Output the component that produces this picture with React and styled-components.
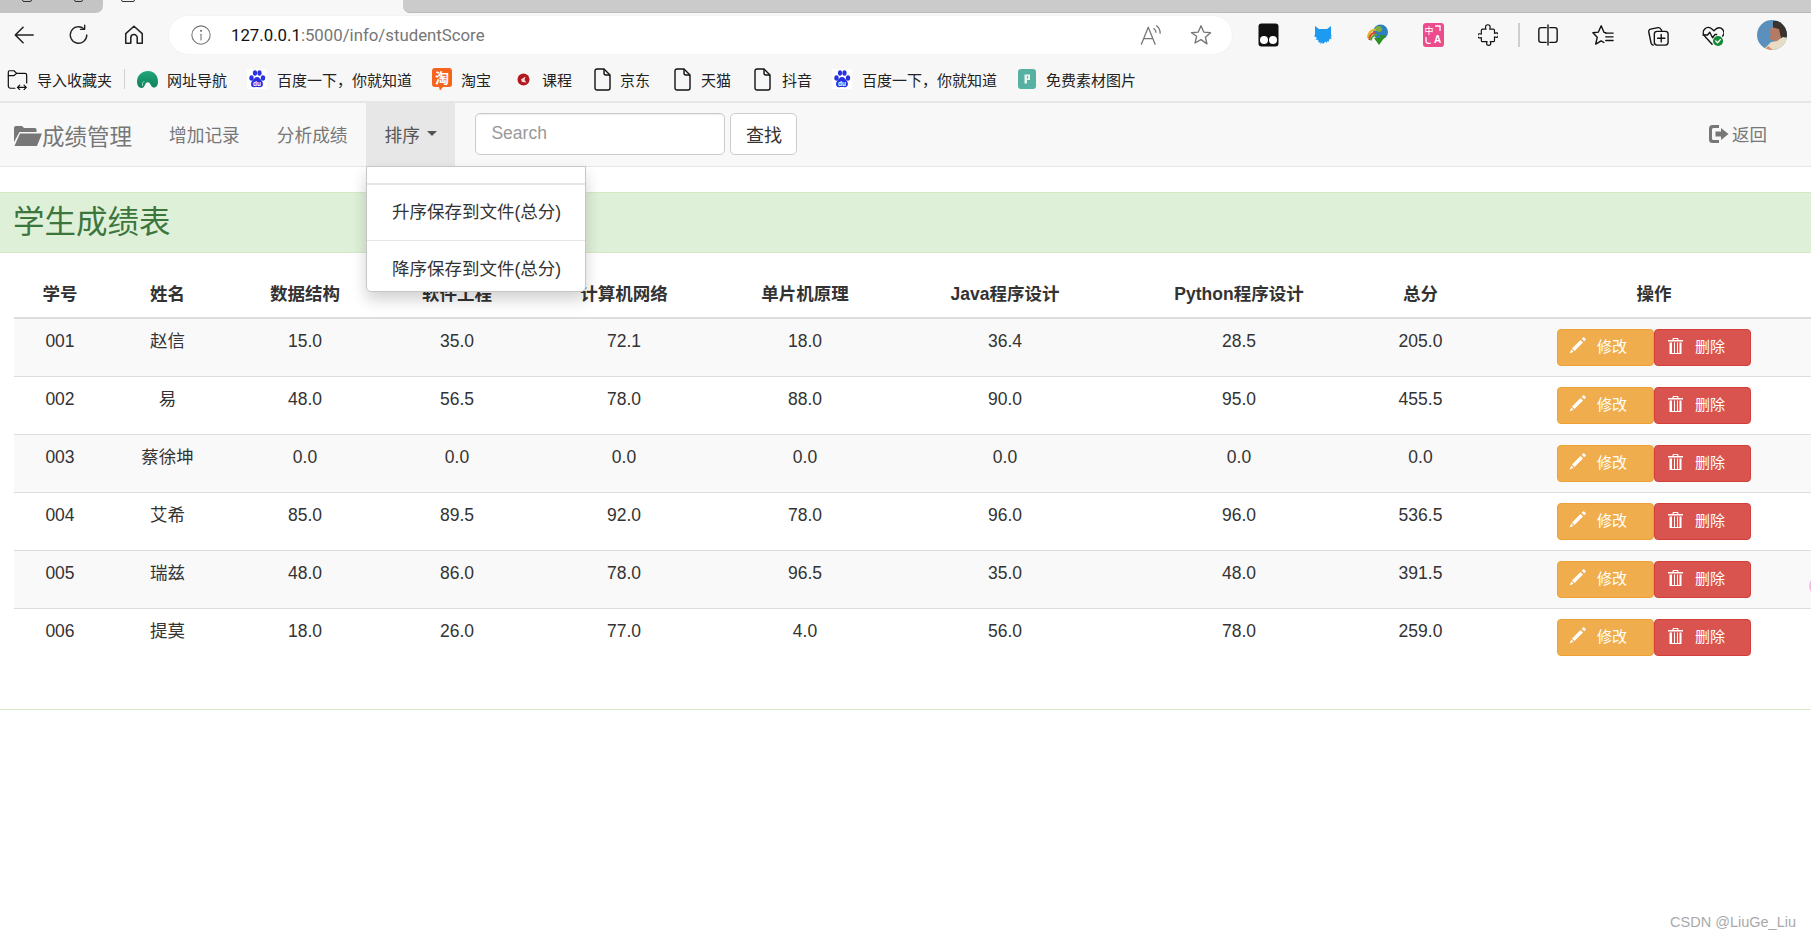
import React from 'react';
import styled, { createGlobalStyle } from 'styled-components';

const SANS = '"Liberation Sans", "Noto Sans CJK SC", sans-serif';
const UI = 'Roboto, "Noto Sans CJK SC", sans-serif';

const Global = createGlobalStyle`
  html, body { margin: 0; padding: 0; background: #fff; overflow: hidden; }
  * { box-sizing: border-box; }
`;

const Page = styled.div`
  position: relative;
  width: 1811px;
  height: 938px;
  overflow: hidden;
  background: #fff;
  font-family: ${SANS};
  color: #333;
`;

/* ---------- browser chrome ---------- */
const TabStrip = styled.div`
  display: flex;
  height: 13px;
  background: #f7f7f7;
`;
const BackTab = styled.div`
  position: relative;
  width: 103px;
  background: #c4c4c4;
  border-bottom-right-radius: 7px;
  overflow: hidden;
`;
const TabGlyph = styled.span`
  position: absolute;
  top: -6px;
  left: ${p => p.$x}px;
  width: ${p => p.$w}px;
  height: 8px;
  border: 1.5px solid #333;
  border-radius: 2px;
`;
const ActiveTab = styled.div`
  position: relative;
  width: 300px;
`;
const RestTabs = styled.div`
  flex: 1;
  background: #cbcbcb;
  border-bottom: 1px solid #b9b9b9;
  border-bottom-left-radius: 7px;
`;
const Toolbar = styled.div`
  display: flex;
  align-items: center;
  height: 44px;
  padding-left: 12.5px;
  background: #f7f7f7;
`;
const ToolGroup = styled.div`
  display: flex;
  align-items: center;
  gap: 33px;
`;
const ToolIcon = styled.span`
  display: flex;
  align-items: center;
  justify-content: center;
  width: 22px;
  height: 24px;
  flex: none;
`;
const AddressBar = styled.div`
  display: flex;
  align-items: center;
  width: 1063px;
  height: 38px;
  margin: 0 25px 0 24.5px;
  padding: 0 20px 0 22px;
  background: #fff;
  border-radius: 19px;
  font: 400 16.8px ${UI};
  box-shadow: 0 0 2px rgba(0,0,0,.05);
`;
const UrlText = styled.div`
  margin-left: 20px;
  flex: 1;
  color: #767676;
  white-space: nowrap;
`;
const UrlHost = styled.span`
  color: #111;
`;
const AddrIcons = styled.div`
  display: flex;
  align-items: center;
  gap: 28px;
`;
const ToolSep = styled.span`
  width: 2px;
  height: 24px;
  margin: 0 17px 0 19px;
  background: #cfcfcf;
  flex: none;
`;
const BookmarkBar = styled.div`
  display: flex;
  align-items: center;
  height: 46px;
  padding-left: 7px;
  background: #f7f7f7;
  border-bottom: 2px solid #e6e6e6;
  font: 400 15px "Noto Sans CJK SC", sans-serif;
  color: #222;
`;
const Bookmark = styled.div`
  display: flex;
  align-items: center;
  width: ${p => p.$w}px;
  flex: none;
  white-space: nowrap;
`;
const BookmarkIcon = styled.span`
  display: flex;
  align-items: center;
  width: ${p => p.$w}px;
  flex: none;
`;
const BookmarkSep = styled.span`
  width: 1px;
  height: 20px;
  margin: 0 12px 0 0;
  background: #cfcfcf;
  flex: none;
`;

/* ---------- app navbar ---------- */
const Navbar = styled.nav`
  position: relative;
  z-index: 5;
  display: flex;
  align-items: stretch;
  height: 64px;
  padding-left: 13px;
  margin-bottom: 25px;
  background: #f8f8f8;
  border-bottom: 1.5px solid #e7e7e7;
`;
const Brand = styled.div`
  display: flex;
  align-items: center;
  padding-right: 18.5px;
  font-size: 22.5px;
  color: #777;
`;
const NavItem = styled.div`
  position: relative;
  display: flex;
  align-items: center;
  padding: 0 18.5px 2px 18.5px;
  font-size: 17.7px;
  color: ${p => (p.$active ? '#555' : '#777')};
  background: ${p => (p.$active ? '#e7e7e7' : 'transparent')};
`;
const Caret = styled.span`
  width: 0;
  height: 0;
  margin-left: 7px;
  border-top: 5px solid #555;
  border-left: 5px solid transparent;
  border-right: 5px solid transparent;
`;
const Dropdown = styled.div`
  position: absolute;
  top: 100%;
  left: 0;
  width: 220px;
  height: 126px;
  padding-top: 16px;
  background: #fff;
  border: 1px solid #c6c6c6;
  border-radius: 0 0 5px 5px;
  box-shadow: 0 8px 15px rgba(0,0,0,.175);
`;
const DropDivider = styled.div`
  height: 1.5px;
  background: #e5e5e5;
`;
const DropItem = styled.div`
  display: flex;
  align-items: center;
  height: 55px;
  padding-left: 25px;
  padding-bottom: 3px;
  font-size: 17.5px;
  color: #333;
  white-space: nowrap;
`;
const SearchForm = styled.div`
  display: flex;
  align-items: center;
  gap: 5px;
  margin-left: 20px;
  padding-bottom: 2px;
`;
const SearchInput = styled.input`
  width: 250px;
  height: 42px;
  padding: 0 15px;
  border: 1px solid #ccc;
  border-radius: 5px;
  background: #fff;
  box-shadow: inset 0 1px 1px rgba(0,0,0,.075);
  font: 400 17.5px ${SANS};
  color: #555;
  &::placeholder { color: #999; opacity: 1; }
`;
const SearchBtn = styled.button`
  width: 67px;
  height: 42px;
  padding: 0;
  border: 1px solid #ccc;
  border-radius: 5px;
  background: #fff;
  font: 400 18px ${SANS};
  color: #333;
`;
const NavReturn = styled.div`
  display: flex;
  align-items: center;
  gap: 3px;
  margin-left: auto;
  padding-right: 44px;
  padding-bottom: 2px;
  font-size: 17.5px;
  color: #777;
`;

/* ---------- panel + table ---------- */
const Panel = styled.section`
  height: 518px;
  border-bottom: 1.5px solid #d6e9c6;
`;
const PanelHeading = styled.h3`
  display: flex;
  align-items: center;
  height: 61px;
  margin: 0;
  padding: 0 0 7px 13px;
  background: #dff0d8;
  border-top: 1px solid #d6e9c6;
  border-bottom: 1px solid #d6e9c6;
  font-size: 31.5px;
  font-weight: 400;
  color: #3c763d;
`;
const PanelBody = styled.div`
  padding: 18.5px 0 0 14px;
`;
const Table = styled.table`
  width: 1816px;
  table-layout: fixed;
  border-collapse: separate;
  border-spacing: 0;
  font-size: 17.5px;
`;
const Col = styled.col`
  width: ${p => p.$w}px;
`;
const Th = styled.th`
  padding: 10px 0;
  height: 47.5px;
  line-height: 25px;
  font-weight: 700;
  text-align: center;
  vertical-align: bottom;
  color: #333;
  border-bottom: 2.5px solid #ddd;
`;
const Tr = styled.tr`
  background: ${p => (p.$odd ? '#f9f9f9' : '#fff')};
`;
const Td = styled.td`
  height: ${p => (p.$first ? '57px' : '57.8px')};
  padding: 10px 0;
  line-height: 25px;
  text-align: center;
  vertical-align: top;
  color: #333;
  border-top: ${p => (p.$first ? '0' : '1px solid #ddd')};
`;
const Actions = styled.div`
  display: flex;
  justify-content: center;
`;
const ActionBtn = styled.button`
  display: flex;
  align-items: center;
  gap: ${p => p.$gap}px;
  width: 97px;
  height: 37px;
  padding: 0 0 4px ${p => p.$pad}px;
  background: ${p => p.$bg};
  border: 1px solid ${p => p.$line};
  border-radius: 4px;
  font: 400 15px ${SANS};
  color: #fff;
`;
const Watermark = styled.div`
  position: absolute;
  right: 15px;
  bottom: 8px;
  font: 400 14.5px "Liberation Sans", sans-serif;
  color: #a9a9a9;
`;
const EdgeDot = styled.div`
  position: absolute;
  left: 1809px;
  top: 576px;
  width: 20px;
  height: 20px;
  border-radius: 50%;
  background: #f6bde8;
`;

/* ---------- icons ---------- */
const Svg = ({ w = 22, h = 22, vb = '0 0 24 24', c = '#222', sw = 1.7, children }) => (
  <svg width={w} height={h} viewBox={vb} fill="none" stroke={c} strokeWidth={sw} strokeLinecap="round" strokeLinejoin="round">{children}</svg>
);
const BackIcon = () => <Svg w={24} h={24}><path d="M22 12H2.5M11 3.5 2.5 12l8.5 8.5" /></Svg>;
const ReloadIcon = () => <Svg w={26} h={26} sw={1.5}><path d="M20.5 12a9 9 0 1 1-3.2-6.9" /><path d="M18.2 1.2v4.6h-4.6" /></Svg>;
const HomeIcon = () => <Svg w={22} h={22}><path d="M3 21V10.5L12 2.5l9 8V21h-5.5v-6a3.5 3.5 0 0 0-7 0v6z" /></Svg>;
const InfoIcon = () => <Svg w={20} h={20} c="#777" sw={1.3}><circle cx="12" cy="12" r="11" /><path d="M12 11v7" /><circle cx="12" cy="7" r=".6" /></Svg>;
const ReadIcon = () => (
  <Svg w={22} h={22} c="#777" sw={1.4}><path d="M1.5 22 9 3.5 16.5 22M4 16h10" /><path d="M15 5a6 6 0 0 1 2.5 4M18 2a10 10 0 0 1 4 8" /></Svg>
);
const StarIcon = () => (
  <Svg w={22} h={22} c="#777" sw={1.5}><path d="M12 2l3 6.8 7.4.7-5.6 4.9 1.7 7.3L12 17l-6.5 3.7 1.7-7.3L1.6 9.5 9 8.8z" /></Svg>
);
const TamperIcon = () => (
  <svg width="21" height="24" viewBox="0 0 21 24"><rect x=".5" y=".5" width="20" height="23" rx="3" fill="#111" /><circle cx="6" cy="17" r="4" fill="#fff" /><circle cx="15" cy="17" r="4" fill="#fff" /></svg>
);
const CatIcon = () => (
  <svg width="18" height="20" viewBox="0 0 18 20"><path fill="#1d9bf0" d="M1 1l4 3h8l4-3v9l1 1-1.5 1 1.5 1.5-2.500.5-1 3-1.200-1-.3 2-1.500-1.500L9 19l-1-1.500L6.500 19l-.3-2-1.200 1-1-3-2.500-.5L3 13l-1.500-1L0 11l1-1z" /></svg>
);
const IdmIcon = () => (
  <svg width="22" height="22" viewBox="0 0 22 22">
    <circle cx="13.500" cy="8" r="7.500" fill="#2e7fbd" />
    <path d="M9 3c2-2 5-1 6 1s-1 4-3 4-5-3-3-5z" fill="#7fae3a" />
    <path d="M1 14C1 8 6 5 9 6" fill="none" stroke="#e8b32a" strokeWidth="2" />
    <path d="M2.500 16C2 11 6 8 9 9" fill="none" stroke="#d94a2a" strokeWidth="2" />
    <path d="M4 16.500C4 13 7 10.500 10 11" fill="none" stroke="#5aa532" strokeWidth="2" />
    <path d="M7 14h6v-3l6 .5L12 21z" fill="#2f8e24" />
  </svg>
);
const TranslateIcon = () => (
  <svg width="21" height="24" viewBox="0 0 21 24">
    <rect width="21" height="24" rx="3" fill="#ec4c8b" />
    <text x="1.500" y="11" fontSize="9" fill="#fff" fontFamily="Noto Sans CJK SC">中</text>
    <text x="11" y="20" fontSize="10" fill="#fff" fontWeight="700" fontFamily="Liberation Sans">A</text>
    <path d="M12 3h5v5M3 14v4c0 2 2 3 5 2" fill="none" stroke="#fff" strokeWidth="1.300" />
  </svg>
);
const PuzzleIcon = () => (
  <Svg w={20} h={22} c="#111" sw={1.4}>
    <path d="M9 2.500a2.800 2.800 0 0 1 5.600 0c0 1-.5 1.500-.5 2.500h4.200c.9 0 1.500.7 1.500 1.500V10c1-.3 1.400-.6 2.200-.6a2.700 2.700 0 0 1 0 5.400c-.8 0-1.200-.3-2.200-.6v4.300c0 .8-.6 1.500-1.500 1.500h-3.600c.3 1 .6 1.400.6 2a2.500 2.500 0 0 1-5 0c0-.6.3-1 .6-2H5.500c-.8 0-1.500-.7-1.500-1.500V15c-1 .3-1.300.5-2 .5a2.500 2.500 0 0 1 0-5c.7 0 1 .2 2 .5V6.500C4 5.700 4.700 5 5.500 5h4c0-1-.5-1.500-.5-2.500z" />
  </Svg>
);
const SplitIcon = () => <Svg w={22} h={24} c="#111" sw={1.5}><path d="M10 4H4.500A2.500 2.500 0 0 0 2 6.500v11A2.500 2.500 0 0 0 4.500 20H10M14 4h5.500A2.500 2.500 0 0 1 22 6.500v11a2.500 2.500 0 0 1-2.500 2.500H14M12 1v22" /></Svg>;
const FavIcon = () => <Svg w={24} h={24} c="#111" sw={1.5}><path d="M15 9.500l-1.800-.3L10 2 7 8.800 1 9.500l4.700 5L4 22l6-3.600 3 1.800" /><path d="M15 10h8M15 14h8M15 18h8" /></Svg>;
const CollectIcon = () => <Svg w={22} h={24} c="#111" sw={1.5}><path d="M7 23c-1 0-2-.5-2.500-2L2 9c-.4-1.500.2-3 2-3.400L12 4c1.500-.2 2.500.5 3 1.500L16 7" /><rect x="8" y="8" width="15" height="15" rx="3" /><path d="M15.500 11.500v8M11.500 15.500h8" /></Svg>;
const HeartIcon = () => (
  <svg width="24" height="24" viewBox="0 0 24 24" fill="none" stroke="#111" strokeWidth="1.500" strokeLinejoin="round" strokeLinecap="round">
    <path d="M11 22 3.500 14C1 11.500 .5 8 3 5.500s6-2 8.500.5L13 7.500l1.500-1.500c2.500-2.500 6-2.500 8 0s1.500 5.500 0 7" />
    <path d="M1 12h5l2.500-3 3 6 2.500-3.500h2" />
    <circle cx="17.500" cy="18.500" r="5.500" fill="#148a37" stroke="none" />
    <path d="M15 18.500l2 2 3-3.500" stroke="#fff" />
  </svg>
);
const Avatar = () => (
  <svg width="30" height="30" viewBox="0 0 30 30">
    <defs><clipPath id="av"><circle cx="15" cy="15" r="15" /></clipPath></defs>
    <g clipPath="url(#av)">
      <rect width="30" height="30" fill="#5b90bd" />
      <path d="M16 1h14v16l-6 2-3-8-5-3z" fill="#3c322c" />
      <path d="M14 7l8 2 2 9-4 4-5-2-3-2 2-3-1-3z" fill="#b57a62" />
      <path d="M8 28l6-6 6-1 6-4 4 1v12H8z" fill="#e8dcc4" />
      <path d="M8 30l3-4 5 4z" fill="#d98c6a" />
    </g>
  </svg>
);
const ImportIcon = () => (
  <Svg w={21} h={21} c="#111" sw={1.4}>
    <path d="M9 22H4a2.500 2.500 0 0 1-2.500-2.500V3.500C1.500 2.500 2.300 2 3 2h5l3 3h9.500c1 0 2 .8 2 2v9" />
    <path d="M1.500 7.500H8l3-2.500" />
    <path d="M12 21h10M14.500 18.500 12 21l2.500 2.500M19.500 18.500 22 21l-2.500 2.500" />
  </Svg>
);
const LeafIcon = () => (
  <svg width="21" height="17" viewBox="0 0 21 17">
    <defs><linearGradient id="leaf" x1="0" y1="0" x2="0" y2="1"><stop offset="0" stopColor="#1fa877" /><stop offset="1" stopColor="#0f7f5c" /></linearGradient></defs>
    <path d="M0 11C0 4 5 0 11 0s10 4 10 11c0 3-1.500 5.500-4 5.500-2.500 0-3-2.500-4.500-4.500-1-1-2.500-1-3.500 0C7.500 14 7.500 17 4.500 17 2 17 0 14 0 11z" fill="url(#leaf)" />
    <path d="M5.500 15v-3l2-2" fill="none" stroke="#bfe7d5" strokeWidth=".8" />
  </svg>
);
const BaiduIcon = () => (
  <svg width="20" height="20" viewBox="0 0 20 20">
    <rect width="20" height="20" fill="#fff" />
    <g fill="#2932e1">
      <ellipse cx="4.500" cy="9" rx="2.200" ry="2.800" />
      <ellipse cx="8" cy="4" rx="2.100" ry="2.800" />
      <ellipse cx="12.500" cy="4" rx="2.100" ry="2.800" />
      <ellipse cx="16" cy="9" rx="2.200" ry="2.800" />
      <path d="M10 8c2.500 0 3 2 4.500 3.500S17 17 14 18c-1.500.5-2.500 0-4 0s-2.500.5-4 0c-3-1-2-5-.5-6.500S7.500 8 10 8z" />
    </g>
    <text x="10" y="16.700" textAnchor="middle" fontSize="6.500" fontWeight="700" fill="#fff" fontFamily="Liberation Sans">du</text>
  </svg>
);
const TaobaoIcon = () => (
  <svg width="20" height="23" viewBox="0 0 20 23">
    <path d="M3 0h14a3 3 0 0 1 3 3v13a3 3 0 0 1-3 3H11l-3 3.500L7 19H3a3 3 0 0 1-3-3V3a3 3 0 0 1 3-3z" fill="#f4641f" />
    <text x="10" y="14.500" textAnchor="middle" fontSize="14" fontWeight="700" fill="#fff" fontFamily="Noto Sans CJK SC">淘</text>
  </svg>
);
const CourseIcon = () => (
  <svg width="13" height="13" viewBox="0 0 13 13">
    <circle cx="6.500" cy="6.500" r="6" fill="#b3181f" />
    <path d="M4 6.500 8.500 3.500 7.500 7 9.500 9.500 5 9z" fill="#f4dcdc" />
  </svg>
);
const FileIcon = () => (
  <svg width="17" height="23" viewBox="0 0 17 23" fill="none" stroke="#111" strokeWidth="1.400" strokeLinejoin="round">
    <path d="M3 1h7l6 6v13a2 2 0 0 1-2 2H3a2 2 0 0 1-2-2V3a2 2 0 0 1 2-2z" />
    <path d="M10 1v4a2 2 0 0 0 2 2h4" />
  </svg>
);
const PIcon = () => (
  <svg width="18" height="20" viewBox="0 0 18 20">
    <rect width="18" height="20" rx="3" fill="#56b1a3" />
    <path d="M6.500 5.500h5.500V11H9v3.500H6.500zM9 7v2.500h1V7z" fill="#e6f5f2" fillRule="evenodd" />
  </svg>
);
const FolderOpenIcon = () => (
  <svg width="29" height="22" viewBox="0 0 29 22" fill="#777">
    <path d="M1 18V4a2 2 0 0 1 2-2h6l2 2h11a1.500 1.500 0 0 1 1.500 1.500V8H6.500z" />
    <path d="M7 9.500h22L24 22H1.500z" />
  </svg>
);
const LogoutIcon = () => (
  <svg width="20" height="18" viewBox="0 0 20 18" fill="#777">
    <path d="M3.500 0H10v3H4.500A1.500 1.500 0 0 0 3 4.500v9A1.500 1.500 0 0 0 4.500 15H10v3H3.500A3.500 3.500 0 0 1 0 14.500v-11A3.500 3.500 0 0 1 3.500 0z" />
    <path d="M6.500 6.500H12V3l7.500 6-7.500 6v-3.500H6.500z" />
  </svg>
);
const PencilIcon = () => (
  <svg width="17" height="17" viewBox="0 0 17 17" fill="#fff">
    <path d="M11.500 3 14 5.500 5.500 14 3 11.500zM12.700 1.800l1.200-1.300a1 1 0 0 1 1.300 0l1.300 1.300a1 1 0 0 1 0 1.300l-1.300 1.200zM2.300 12.500l2.200 2.200-3.900 1.700z" />
  </svg>
);
const TrashIcon = () => (
  <svg width="15" height="16" viewBox="0 0 15 16" fill="#fff">
    <path d="M5.500 0h4a1 1 0 0 1 1 1v1h4.500v1.500H0V2h4.500V1a1 1 0 0 1 1-1zm.2 1v1h3.600V1z" fillRule="evenodd" />
    <path d="M1.500 4.500H4V15h2V4.500h1V15h2V4.500h1V15h1.500V4.500h2V16h-12z" />
  </svg>
);

/* ---------- data ---------- */
const BOOKMARKS = [
  { w: 117, iw: 30, icon: <ImportIcon />, text: '导入收藏夹' },
  { sep: true },
  { w: 110, iw: 30, icon: <LeafIcon />, text: '网址导航' },
  { w: 185, iw: 30, icon: <BaiduIcon />, text: '百度一下，你就知道' },
  { w: 85, iw: 29, icon: <TaobaoIcon />, text: '淘宝' },
  { w: 77, iw: 25, icon: <CourseIcon />, text: '课程' },
  { w: 80, iw: 26, icon: <FileIcon />, text: '京东' },
  { w: 80, iw: 27, icon: <FileIcon />, text: '天猫' },
  { w: 78, iw: 28, icon: <FileIcon />, text: '抖音' },
  { w: 186, iw: 30, icon: <BaiduIcon />, text: '百度一下，你就知道' },
  { w: 130, iw: 28, icon: <PIcon />, text: '免费素材图片' },
];
const COLUMNS = [
  { w: 92, t: '学号' },
  { w: 123, t: '姓名' },
  { w: 152, t: '数据结构' },
  { w: 152, t: '软件工程' },
  { w: 182, t: '计算机网络' },
  { w: 180, t: '单片机原理' },
  { w: 220, t: 'Java程序设计' },
  { w: 248, t: 'Python程序设计' },
  { w: 115, t: '总分' },
  { w: 352, t: '操作' },
];
const ROWS = [
  ['001', '赵信', '15.0', '35.0', '72.1', '18.0', '36.4', '28.5', '205.0'],
  ['002', '易', '48.0', '56.5', '78.0', '88.0', '90.0', '95.0', '455.5'],
  ['003', '蔡徐坤', '0.0', '0.0', '0.0', '0.0', '0.0', '0.0', '0.0'],
  ['004', '艾希', '85.0', '89.5', '92.0', '78.0', '96.0', '96.0', '536.5'],
  ['005', '瑞兹', '48.0', '86.0', '78.0', '96.5', '35.0', '48.0', '391.5'],
  ['006', '提莫', '18.0', '26.0', '77.0', '4.0', '56.0', '78.0', '259.0'],
];

export default function App() {
  return (
    <Page>
      <Global />
      <TabStrip>
        <BackTab>
          <TabGlyph $x={22} $w={10} />
          <TabGlyph $x={74} $w={9} />
        </BackTab>
        <ActiveTab>
          <TabGlyph $x={18} $w={14} />
        </ActiveTab>
        <RestTabs />
      </TabStrip>
      <Toolbar>
        <ToolGroup>
          <ToolIcon><BackIcon /></ToolIcon>
          <ToolIcon><ReloadIcon /></ToolIcon>
          <ToolIcon><HomeIcon /></ToolIcon>
        </ToolGroup>
        <AddressBar>
          <InfoIcon />
          <UrlText><UrlHost>127.0.0.1</UrlHost>:5000/info/studentScore</UrlText>
          <AddrIcons>
            <ReadIcon />
            <StarIcon />
          </AddrIcons>
        </AddressBar>
        <ToolGroup>
          <ToolIcon><TamperIcon /></ToolIcon>
          <ToolIcon><CatIcon /></ToolIcon>
          <ToolIcon><IdmIcon /></ToolIcon>
          <ToolIcon><TranslateIcon /></ToolIcon>
          <ToolIcon><PuzzleIcon /></ToolIcon>
        </ToolGroup>
        <ToolSep />
        <ToolGroup>
          <ToolIcon><SplitIcon /></ToolIcon>
          <ToolIcon><FavIcon /></ToolIcon>
          <ToolIcon><CollectIcon /></ToolIcon>
          <ToolIcon><HeartIcon /></ToolIcon>
          <Avatar />
        </ToolGroup>
      </Toolbar>
      <BookmarkBar>
        {BOOKMARKS.map((b, i) => (b.sep ? <BookmarkSep key={i} /> : (
          <Bookmark key={i} $w={b.w}>
            <BookmarkIcon $w={b.iw}>{b.icon}</BookmarkIcon>
            {b.text}
          </Bookmark>
        )))}
      </BookmarkBar>
      <Navbar>
        <Brand><FolderOpenIcon />成绩管理</Brand>
        <NavItem>增加记录</NavItem>
        <NavItem>分析成绩</NavItem>
        <NavItem $active>
          排序<Caret />
          <Dropdown>
            <DropDivider />
            <DropItem>升序保存到文件(总分)</DropItem>
            <DropDivider />
            <DropItem>降序保存到文件(总分)</DropItem>
          </Dropdown>
        </NavItem>
        <SearchForm>
          <SearchInput placeholder="Search" readOnly />
          <SearchBtn>查找</SearchBtn>
        </SearchForm>
        <NavReturn><LogoutIcon />返回</NavReturn>
      </Navbar>
      <Panel>
        <PanelHeading>学生成绩表</PanelHeading>
        <PanelBody>
          <Table>
            <colgroup>
              {COLUMNS.map(c => <Col key={c.t} $w={c.w} />)}
            </colgroup>
            <thead>
              <tr>{COLUMNS.map(c => <Th key={c.t}>{c.t}</Th>)}</tr>
            </thead>
            <tbody>
              {ROWS.map((r, i) => (
                <Tr key={r[0]} $odd={i % 2 === 0}>
                  {r.map((v, j) => <Td key={j} $first={i === 0}>{v}</Td>)}
                  <Td $first={i === 0}>
                    <Actions>
                      <ActionBtn $bg="#f0ad4e" $line="#eea236" $pad={11} $gap={11}><PencilIcon />修改</ActionBtn>
                      <ActionBtn $bg="#d9534f" $line="#d43f3a" $pad={13} $gap={12}><TrashIcon />删除</ActionBtn>
                    </Actions>
                  </Td>
                </Tr>
              ))}
            </tbody>
          </Table>
        </PanelBody>
      </Panel>
      <EdgeDot />
      <Watermark>CSDN @LiuGe_Liu</Watermark>
    </Page>
  );
}
